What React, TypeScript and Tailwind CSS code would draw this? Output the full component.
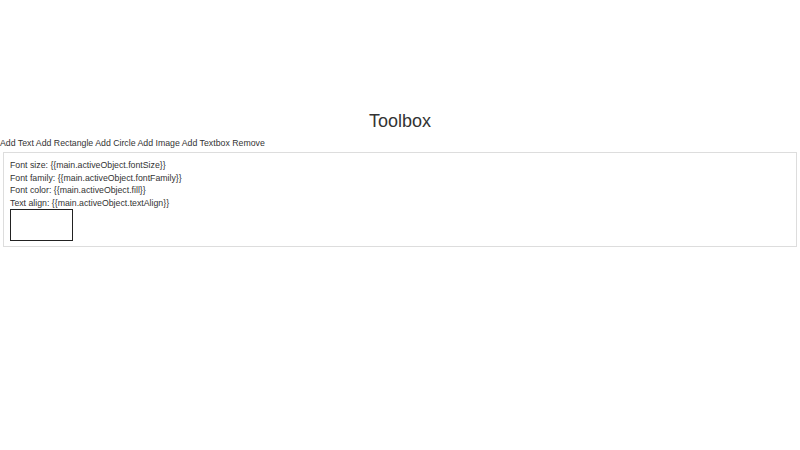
export default function App() {
  return (
    <div className="w-[800px] h-[450px] bg-white text-[#333]" style={{ fontFamily: '"Liberation Sans", Arial, sans-serif' }}>
      <div className="pt-[110px] text-center text-[18px] leading-[22px]">Toolbox</div>
      <div className="mt-[5px] text-[8.75px] leading-[12px] whitespace-pre">
        Add Text Add Rectangle Add Circle Add Image Add Textbox Remove
      </div>
      <div className="mx-[3px] mt-[3px] border border-[#ddd] px-[6px] pt-[6px] pb-[5px] text-[8.75px] leading-[12.5px]">
        <div>Font size: {'{{main.activeObject.fontSize}}'}</div>
        <div>Font family: {'{{main.activeObject.fontFamily}}'}</div>
        <div>Font color: {'{{main.activeObject.fill}}'}</div>
        <div>Text align: {'{{main.activeObject.textAlign}}'}</div>
        <div className="w-[63px] h-[32px] border border-[#222]"></div>
      </div>
    </div>
  );
}
